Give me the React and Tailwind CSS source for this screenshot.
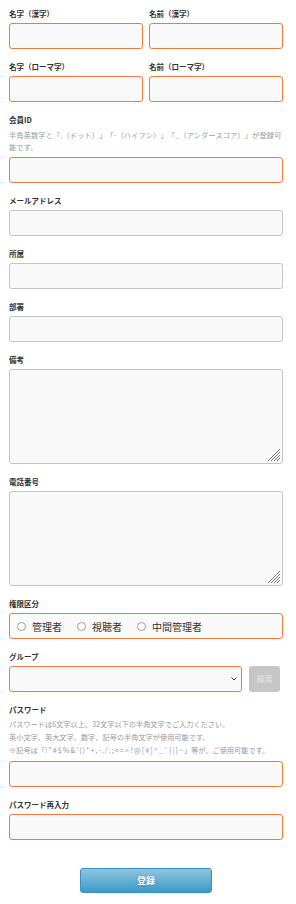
import React from 'react';

const font = { fontFamily: '"Noto Sans CJK JP", "Noto Sans", sans-serif' };

// 入力欄の共通スタイル
const inputBase = 'block w-full h-[26px] rounded-[3px] bg-[#f9f9f9] border outline-none';
const orange = 'border-[#f47a3a]';
const gray = 'border-[#c4c4c4]';

function Label({ children }) {
  return <div className="text-[7.5px] leading-[12px] font-bold text-[#333] mb-[3px]">{children}</div>;
}

function Help({ children }) {
  return <div className="text-[7.2px] leading-[12px] tracking-[0.15px] text-[#999]">{children}</div>;
}

function Grip() {
  return (
    <svg className="absolute right-[2px] bottom-[2px] pointer-events-none" width="14" height="14" viewBox="0 0 14 14">
      <g stroke="#777" strokeWidth="1">
        <line x1="13" y1="1" x2="1" y2="13" />
        <line x1="13" y1="4" x2="4" y2="13" />
        <line x1="13" y1="7" x2="7" y2="13" />
        <line x1="13" y1="10" x2="10" y2="13" />
      </g>
    </svg>
  );
}

function Area() {
  return (
    <div className="relative">
      <textarea className={`block w-full h-[95px] rounded-[3px] bg-[#f9f9f9] border ${gray} resize-none outline-none`} />
      <Grip />
    </div>
  );
}

function Radio({ label }) {
  return (
    <label className="flex items-center gap-[6px]">
      <span className="w-[9px] h-[9px] rounded-full border border-[#9a9a9a] bg-white" />
      <span className="text-[10px] text-[#333]">{label}</span>
    </label>
  );
}

export default function App() {
  return (
    <div className="w-full bg-white pl-[9px] pr-[13px] pt-[8px] pb-[11px] [text-spacing-trim:space-all]" style={font}>
      <div className="grid grid-cols-2 gap-x-[6px] gap-y-[12px] mb-[12px]">
        <div>
          <Label>名字（漢字）</Label>
          <input className={`${inputBase} ${orange}`} />
        </div>
        <div>
          <Label>名前（漢字）</Label>
          <input className={`${inputBase} ${orange}`} />
        </div>
        <div>
          <Label>名字（ローマ字）</Label>
          <input className={`${inputBase} ${orange}`} />
        </div>
        <div>
          <Label>名前（ローマ字）</Label>
          <input className={`${inputBase} ${orange}`} />
        </div>
      </div>

      <div className="flex flex-col gap-[12px]">
        <div>
          <Label>会員ID</Label>
          <div className="mb-[4px]">
            <Help>半角英数字と「.（ドット）」「-（ハイフン）」「_（アンダースコア）」が登録可能です。</Help>
          </div>
          <input className={`${inputBase} ${orange}`} />
        </div>

        <div>
          <Label>メールアドレス</Label>
          <input className={`${inputBase} ${gray}`} />
        </div>

        <div>
          <Label>所属</Label>
          <input className={`${inputBase} ${gray}`} />
        </div>

        <div>
          <Label>部署</Label>
          <input className={`${inputBase} ${gray}`} />
        </div>

        <div>
          <Label>備考</Label>
          <Area />
        </div>

        <div>
          <Label>電話番号</Label>
          <Area />
        </div>

        <div>
          <Label>権限区分</Label>
          <div className={`flex items-center gap-[15px] h-[26px] px-[7px] rounded-[3px] bg-[#f9f9f9] border ${orange}`}>
            <Radio label="管理者" />
            <Radio label="視聴者" />
            <Radio label="中間管理者" />
          </div>
        </div>

        <div>
          <Label>グループ</Label>
          <div className="flex items-center gap-[7px]">
            <div className="relative w-[233px]">
              <select className={`${inputBase} ${orange} appearance-none`} />
              <svg className="absolute right-[5px] top-[11px] pointer-events-none" width="6" height="4" viewBox="0 0 6 4">
                <path d="M0.5 0.5 L3 3 L5.5 0.5" fill="none" stroke="#333" strokeWidth="1" />
              </svg>
            </div>
            <button className="w-[31px] h-[26px] rounded-[3px] bg-[#c6c6c6] text-[#dedede] text-[8px] font-bold">検索</button>
          </div>
        </div>

        <div>
          <Label>パスワード</Label>
          <div className="mb-[4px] mt-[-1px] text-[7.2px] leading-[13px] text-[#999]">
            <div>パスワードは6文字以上、32文字以下の半角文字でご入力ください。</div>
            <div>英小文字、英大文字、数字、記号の半角文字が使用可能です。</div>
            <div>
              ※記号は「<span className="tracking-[1px]">!"#$%&amp;'()*+,-./:;&lt;=&gt;?@[¥]^_`{'{'}|{'}'}~</span>」等が、ご使用可能です。
            </div>
          </div>
          <input className={`${inputBase} ${orange}`} />
        </div>

        <div>
          <Label>パスワード再入力</Label>
          <input className={`${inputBase} ${orange}`} />
        </div>
      </div>

      <div className="flex justify-center mt-[28px]">
        <button className="w-[132px] h-[25px] rounded-[3px] border border-[#3b90bf] bg-gradient-to-b from-[#8ec6e0] to-[#3a99c6] text-white text-[9px] font-bold [text-shadow:0_0_2px_rgba(0,0,0,0.3)]">
          登録
        </button>
      </div>
    </div>
  );
}
